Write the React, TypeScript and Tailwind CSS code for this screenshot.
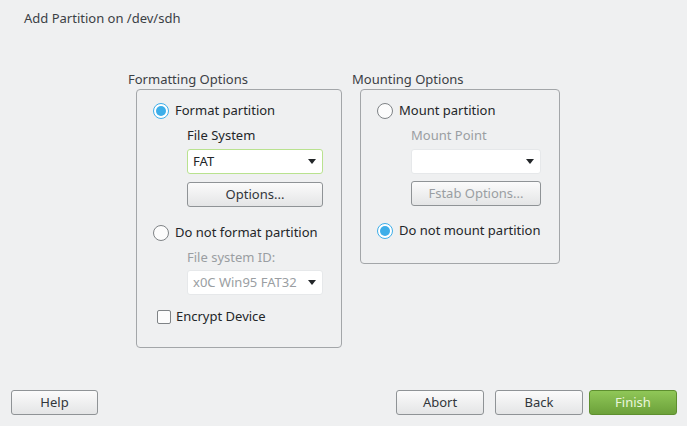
import React from "react";

function Radio({ checked }: { checked: boolean }) {
  return checked ? (
    <span className="flex h-[16px] w-[16px] items-center justify-center rounded-full border-[1.5px] border-[#3daee9] bg-white">
      <span className="h-[10px] w-[10px] rounded-full bg-[#3daee9]" />
    </span>
  ) : (
    <span className="h-[16px] w-[16px] rounded-full border-[1.5px] border-[#7f8386] bg-[#fcfcfc]" />
  );
}

function Arrow() {
  return (
    <svg width="8" height="5" viewBox="0 0 8 5">
      <path d="M0 0h8L4 5z" fill="#232629" />
    </svg>
  );
}

function Combo({ value, active, width }: { value: string; active?: boolean; width: string }) {
  return (
    <div
      className={
        "flex h-[25px] items-center justify-between rounded-[3px] bg-white pl-[5px] pr-[6px] " +
        width +
        (active ? " border border-[#b9e28f]" : " border border-[#e6e8ea]")
      }
    >
      <span className={active ? "text-[#232629]" : "text-[#9a9ea2]"}>{value}</span>
      <Arrow />
    </div>
  );
}

function Button({ label, width, dim }: { label: string; width: string; dim?: boolean }) {
  return (
    <div
      className={
        "flex h-[25px] items-center justify-center rounded-[3px] border border-[#8f9396] bg-gradient-to-b from-[#fbfbfb] to-[#e4e5e6] " +
        width +
        (dim ? " text-[#9a9ea2]" : " text-[#31363b]")
      }
    >
      {label}
    </div>
  );
}

export default function App() {
  return (
    <div
      className="flex h-[426px] w-[687px] flex-col bg-[#eff0f1] text-[13px] text-[#31363b]"
      style={{ fontFamily: '"Noto Sans", "Open Sans", sans-serif' }}
    >
      <div className="flex h-[37px] items-center pl-[24px] text-[#3b4045]">Add Partition on /dev/sdh</div>

      <div className="mt-[32px] flex gap-[10px] pl-[128px]">
        {/* Formatting */}
        <div className="flex flex-col">
          <div className="h-[20px] leading-[20px] text-[#3b4045]">Formatting Options</div>
          <div className="ml-[8px] flex h-[259px] w-[206px] flex-col rounded-[4px] border border-[#a3a6a9] pl-[16px] pt-[11px]">
            <div className="flex h-[20px] items-center gap-[6px]">
              <Radio checked />
              <span className="text-[#232629]">Format partition</span>
            </div>
            <div className="ml-[34px] flex flex-col">
              <div className="mt-[5px] h-[18px] leading-[18px] text-[#232629]">File System</div>
              <div className="mt-[5px]">
                <Combo value="FAT" active width="w-[136px]" />
              </div>
              <div className="mt-[8px]">
                <Button label="Options..." width="w-[136px]" />
              </div>
            </div>
            <div className="mt-[16px] flex h-[20px] items-center gap-[6px]">
              <Radio checked={false} />
              <span className="text-[#232629]">Do not format partition</span>
            </div>
            <div className="ml-[34px] flex flex-col">
              <div className="mt-[5px] h-[18px] leading-[18px] text-[#9a9ea2]">File system ID:</div>
              <div className="mt-[4px]">
                <Combo value="x0C Win95 FAT32" width="w-[136px]" />
              </div>
            </div>
            <div className="mt-[12px] flex h-[20px] items-center gap-[5px] pl-[4px]">
              <span className="h-[14px] w-[14px] rounded-[2px] border border-[#7f8386] bg-[#fcfcfc]" />
              <span className="text-[#232629]">Encrypt Device</span>
            </div>
          </div>
        </div>

        {/* Mounting */}
        <div className="flex flex-col">
          <div className="h-[20px] leading-[20px] text-[#3b4045]">Mounting Options</div>
          <div className="ml-[8px] flex h-[175px] w-[200px] flex-col rounded-[4px] border border-[#a3a6a9] pl-[16px] pt-[11px]">
            <div className="flex h-[20px] items-center gap-[6px]">
              <Radio checked={false} />
              <span className="text-[#232629]">Mount partition</span>
            </div>
            <div className="ml-[34px] flex flex-col">
              <div className="mt-[5px] h-[18px] leading-[18px] text-[#9a9ea2]">Mount Point</div>
              <div className="mt-[5px]">
                <Combo value="" width="w-[130px]" />
              </div>
              <div className="mt-[7px]">
                <Button label="Fstab Options..." width="w-[130px]" dim />
              </div>
            </div>
            <div className="mt-[15px] flex h-[20px] items-center gap-[6px]">
              <Radio checked />
              <span className="text-[#232629]">Do not mount partition</span>
            </div>
          </div>
        </div>
      </div>

      <div className="mt-auto flex items-center pl-[11px] pr-[10px] pb-[11px]">
        <Button label="Help" width="w-[87px]" />
        <div className="flex-1" />
        <Button label="Abort" width="w-[88px]" />
        <div className="ml-[11px]">
          <Button label="Back" width="w-[88px]" />
        </div>
        <div className="ml-[6px] flex h-[25px] w-[88px] items-center justify-center rounded-[3px] border border-[#5e8f2f] bg-gradient-to-b from-[#90c758] to-[#6ca13a] text-[#eaf6dc]">
          Finish
        </div>
      </div>
    </div>
  );
}
